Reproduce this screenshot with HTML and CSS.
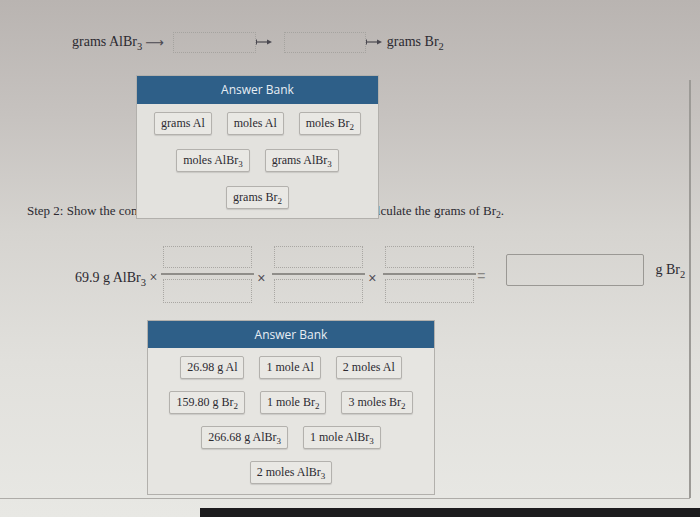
FILE: index.html
```html
<!DOCTYPE html>
<html>
<head>
<meta charset="utf-8">
<link rel="stylesheet" href="styles.css">
</head>
<body>
<div class="page">
  <div class="card">
    <div class="chain">
      <span class="label">grams AlBr<sub>3</sub></span>
      <span class="long-arrow">&#10230;</span>
      <span class="drop drop-a"></span>
      <svg class="maps" width="16" height="8" viewBox="0 0 16 8"><line x1="0.5" y1="1.5" x2="0.5" y2="6.5" stroke="#4a4850" stroke-width="1"/><line x1="0.5" y1="4" x2="12" y2="4" stroke="#4a4850" stroke-width="1.2"/><polygon points="11,1.6 16,4 11,6.4" fill="#4a4850"/></svg>
      <span class="drop drop-b"></span>
      <svg class="maps" width="16" height="8" viewBox="0 0 16 8"><line x1="0.5" y1="1.5" x2="0.5" y2="6.5" stroke="#4a4850" stroke-width="1"/><line x1="0.5" y1="4" x2="12" y2="4" stroke="#4a4850" stroke-width="1.2"/><polygon points="11,1.6 16,4 11,6.4" fill="#4a4850"/></svg>
      <span class="label label-end">grams Br<sub>2</sub></span>
    </div>

    <p class="step">Step 2: Show the conversions required to solve this problem and calculate the grams of Br<sub>2</sub>.</p>

    <div class="equation">
      <span class="given">69.9 g AlBr<sub>3</sub> &times;</span>
      <div class="frac"><span class="num"></span><span class="bar"></span><span class="den"></span></div>
      <span class="op">&times;</span>
      <div class="frac"><span class="num"></span><span class="bar"></span><span class="den"></span></div>
      <span class="op">&times;</span>
      <div class="frac"><span class="num"></span><span class="bar"></span><span class="den"></span></div>
      <span class="op eq">=</span>
      <span class="answer"></span>
      <span class="unit">g Br<sub>2</sub></span>
    </div>

    <div class="bank bank-two">
      <div class="bank-head">Answer Bank</div>
      <div class="bank-body">
        <div class="chip-row">
          <span class="chip">26.98 g Al</span>
          <span class="chip">1 mole Al</span>
          <span class="chip">2 moles Al</span>
        </div>
        <div class="chip-row">
          <span class="chip">159.80 g Br<sub>2</sub></span>
          <span class="chip">1 mole Br<sub>2</sub></span>
          <span class="chip">3 moles Br<sub>2</sub></span>
        </div>
        <div class="chip-row">
          <span class="chip">266.68 g AlBr<sub>3</sub></span>
          <span class="chip">1 mole AlBr<sub>3</sub></span>
        </div>
        <div class="chip-row">
          <span class="chip">2 moles AlBr<sub>3</sub></span>
        </div>
      </div>
    </div>

    <div class="bank bank-one">
      <div class="bank-head">Answer Bank</div>
      <div class="bank-body">
        <div class="chip-row">
          <span class="chip">grams Al</span>
          <span class="chip">moles Al</span>
          <span class="chip">moles Br<sub>2</sub></span>
        </div>
        <div class="chip-row">
          <span class="chip">moles AlBr<sub>3</sub></span>
          <span class="chip">grams AlBr<sub>3</sub></span>
        </div>
        <div class="chip-row">
          <span class="chip">grams Br<sub>2</sub></span>
        </div>
      </div>
    </div>
  </div>
  <div class="bezel"></div>
</div>
</body>
</html>
```

FILE: styles.css
```css
html, body {
  margin: 0;
  padding: 0;
}

body {
  width: 700px;
  height: 517px;
  overflow: hidden;
}

.page {
  width: 700px;
  height: 517px;
  position: relative;
  background: linear-gradient(to bottom, #b9b4b1 0%, #c6c2bf 22%, #d6d4d0 45%, #e1e0dc 70%, #e8e8e4 100%);
  font-family: "Liberation Serif", "Times New Roman", serif;
  color: #2c2a31;
}

sub {
  font-size: 75%;
  vertical-align: -0.35em;
  line-height: 0;
}

.card {
  position: relative;
  width: 690px;
  height: 498px;
  border-bottom: 1px solid #aeaca8;
}

.card::after {
  content: "";
  position: absolute;
  right: -1px;
  top: 80px;
  bottom: 0;
  width: 2px;
  background: #9c9a96;
}

/* Step 1 chain */
.chain {
  display: flex;
  align-items: center;
  height: 20px;
  padding-top: 32px;
  padding-left: 72px;
  font-size: 14px;
}

.label {
  white-space: nowrap;
}

.long-arrow {
  margin-left: 3px;
  font-size: 13px;
  font-family: "DejaVu Sans", sans-serif;
  color: #4a4850;
}

.drop {
  display: block;
  height: 19px;
  border: 1px dotted #a5a39f;
}

.drop-a {
  width: 81px;
  margin-left: 9px;
}

.drop-b {
  width: 80px;
  margin-left: 12px;
}

.maps {
  display: block;
}

.label-end {
  margin-left: 5px;
}

/* Step 2 line */
.step {
  margin: 151px 0 0 27px;
  font-size: 13px;
  line-height: 16px;
  white-space: nowrap;
}

/* equation */
.equation {
  display: flex;
  align-items: center;
  margin-top: 27px;
  padding-left: 75px;
  font-size: 14px;
}

.given {
  white-space: nowrap;
  margin-top: 6px;
}

.frac {
  display: flex;
  flex-direction: column;
  width: 93px;
  margin-left: 4px;
}

.num, .den {
  display: block;
  border: 1px dotted #a9a7a3;
  margin: 0 2px;
}

.num {
  height: 20px;
}

.den {
  height: 22px;
}

.bar {
  display: block;
  height: 2px;
  margin: 5px 0 4px;
  background: #8f8d89;
}

.op {
  margin-top: 6px;
  font-family: "Liberation Sans", Arial, sans-serif;
  font-size: 14px;
  color: #4f4d55;
  width: 14px;
  text-align: center;
}

.eq {
  width: 10px;
  color: #8a8885;
  margin-top: 2px;
}

.answer {
  display: block;
  width: 136px;
  height: 30px;
  border: 1px solid #9a9894;
  border-radius: 2px;
  margin-left: 20px;
  margin-bottom: 10px;
}

.unit {
  margin-left: 11px;
  margin-bottom: 10px;
  white-space: nowrap;
}

/* Answer banks */
.bank {
  box-sizing: border-box;
  background: #e6e5e1;
  border: 1px solid #b2b0ac;
  font-size: 12px;
}

.bank-head {
  background: #2e5f88;
  color: #e8eef4;
  font-family: "Open Sans", "Liberation Sans", sans-serif;
  font-size: 12px;
  text-align: center;
}

.bank-one {
  position: absolute;
  left: 136px;
  top: 75px;
  width: 243px;
  height: 144px;
  background: #e3e2de;
}

.bank-one .bank-head {
  height: 28px;
  line-height: 28px;
}

.bank-one .bank-body {
  padding-top: 8px;
  display: flex;
  flex-direction: column;
  gap: 14px;
}

.bank-two {
  margin: 17px 0 0 147px;
  width: 288px;
  height: 175px;
}

.bank-two .bank-head {
  height: 27px;
  line-height: 27px;
}

.bank-two .bank-body {
  padding-top: 8px;
  display: flex;
  flex-direction: column;
  gap: 12px;
}

.chip-row {
  display: flex;
  justify-content: center;
  gap: 15px;
}

.chip {
  box-sizing: border-box;
  height: 23px;
  line-height: 21px;
  padding: 0 6px;
  border: 1px solid #b3b1ad;
  border-radius: 2px;
  background: #e9e8e4;
  box-shadow: 0 1px 1px rgba(0, 0, 0, 0.12);
  white-space: nowrap;
}

/* monitor bezel at the bottom */
.bezel {
  height: 9px;
  margin-left: 200px;
  margin-top: 9px;
  background: #1d1c1e;
}
```
